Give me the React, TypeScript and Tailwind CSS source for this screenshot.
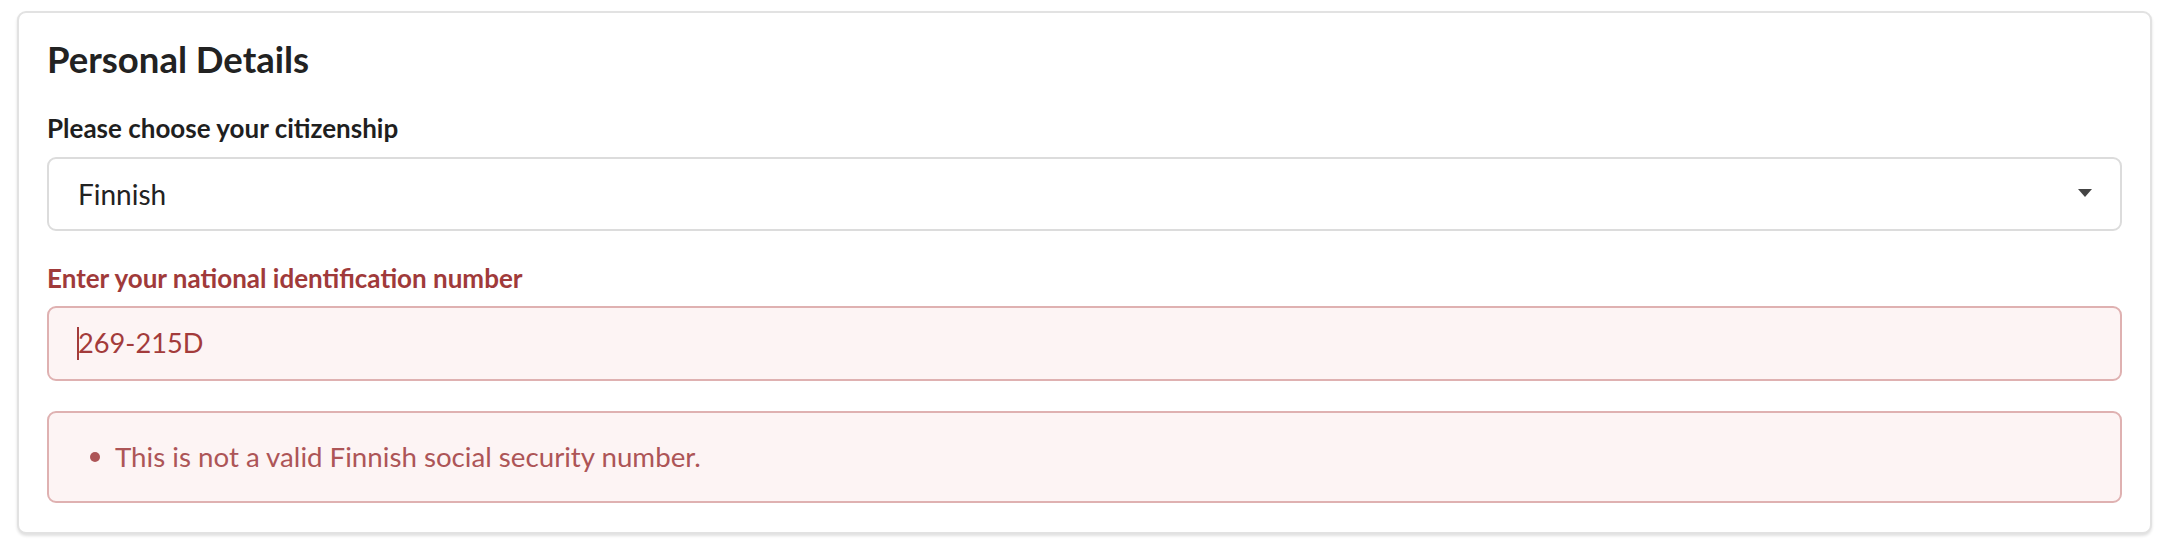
export default function App() {
  return (
    <div className="min-h-screen bg-white pl-[17px] pt-[11px] font-['Lato','Liberation_Sans',sans-serif]">
      <section className="w-[2135px] rounded-[9px] border-2 border-[#e2e2e2] bg-white px-[28px] pt-[25px] pb-[29px] shadow-[0_2px_3px_rgba(0,0,0,0.12)]">
        <h2 className="text-[36.5px] leading-[42px] font-bold text-[#222222]">Personal Details</h2>

        <label className="mt-[34px] block text-[26px] leading-[29px] font-bold text-[#1f1f1f]">
          Please choose your citizenship
        </label>
        <div className="mt-[14px] flex h-[74px] items-center justify-between rounded-[9px] border-2 border-[#dcdcdc] bg-white pl-[29px] pr-[28px]">
          <span className="text-[28px] text-[#222222]">Finnish</span>
          <svg width="14" height="8" viewBox="0 0 14 8" className="mt-[-2px]">
            <path d="M0 0h14L7 8z" fill="#444444" />
          </svg>
        </div>

        <label className="mt-[33px] block text-[26px] leading-[29px] font-bold text-[#a03a3a]">
          Enter your national identification number
        </label>
        <div className="mt-[13px] flex h-[75px] items-center rounded-[9px] border-2 border-[#dfb1b1] bg-[#fdf4f4] pl-[28px]">
          <span className="mr-[-1px] inline-block h-[33px] w-[2px] bg-[#a33b3b]" />
          <span className="text-[27.2px] text-[#a33b3b]">269-215D</span>
        </div>

        <div className="mt-[30px] flex h-[92px] items-center rounded-[9px] border-2 border-[#dfb1b1] bg-[#fdf4f4] pl-[41px]">
          <span className="inline-block h-[10px] w-[10px] rounded-full bg-[#ad5557]" />
          <span className="ml-[15px] text-[27.7px] text-[#ad5557]">This is not a valid Finnish social security number.</span>
        </div>
      </section>
    </div>
  );
}
